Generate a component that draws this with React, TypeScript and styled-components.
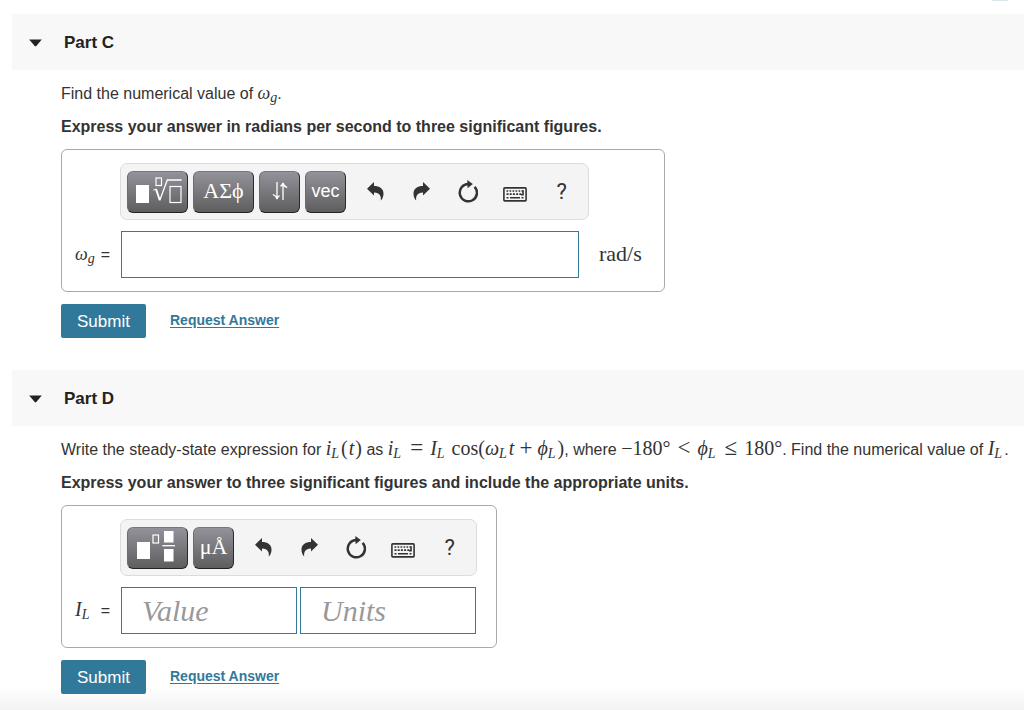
import React from "react";
import styled, { createGlobalStyle } from "styled-components";

const sans = `"Liberation Sans", Arial, sans-serif`;
const serif = `"Liberation Serif", "Times New Roman", serif`;

const GlobalStyle = createGlobalStyle`
  * { box-sizing: border-box; }
  body {
    margin: 0;
    background: #fff;
    color: #333;
    font-family: ${sans};
    font-size: 16px;
  }
  button, input { font: inherit; }
`;

const Page = styled.main`
  padding: 0 0 16px 12px;
  background: linear-gradient(to top, #f3f3f3, #fff 24px);
`;

const TopEdge = styled.div`
  display: flex;
  justify-content: flex-end;
  height: 14px;
  padding-right: 16px;
`;

const TopSliver = styled.div`
  width: 16px;
  height: 1px;
  background: #dce7ec;
`;

const Part = styled.section`
  & + & {
    margin-top: 32px;
  }
`;

const PartHeader = styled.header`
  display: flex;
  align-items: center;
  height: 56px;
  padding: 1px 0 0 16px;
  gap: 21px;
  background: #f8f8f8;
`;

const Toggle = styled.button`
  display: flex;
  padding: 0;
  border: 0;
  background: none;
`;

const PartTitle = styled.h2`
  margin: 0;
  color: #222;
  font-size: 17px;
  line-height: 24px;
`;

const PartBody = styled.div`
  padding: 12px 0 0 49px;
`;

const Prompt = styled.p`
  margin: 0 0 9px;
  line-height: 24px;
`;

const Instructions = styled.p`
  margin: 0 0 10px;
  font-weight: bold;
  line-height: 24px;
`;

const AnswerBox = styled.div`
  display: grid;
  grid-template-columns: 45px auto;
  row-gap: 11px;
  width: fit-content;
  max-width: 100%;
  padding: 13px 19px 13px 13px;
  border: 1px solid #a9a9a9;
  border-radius: 6px;
  background: #fff;
`;

const Toolbar = styled.div`
  grid-column: 2;
  justify-self: start;
  display: flex;
  align-items: center;
  gap: 5px;
  height: 57px;
  padding: 0 3px 0 6px;
  border: 1px solid #dcdcdc;
  border-radius: 7px;
  background: #f4f4f4;
`;

const ToolButton = styled.button<{ $wide?: boolean; $face?: string }>`
  display: flex;
  align-items: center;
  justify-content: center;
  width: ${(p) => (p.$wide ? 61 : 41)}px;
  height: 42px;
  padding: 0 0 2px;
  border: 1px solid;
  border-color: #77767b #2a2a2a #222 #6c6c70;
  border-radius: 6px;
  background: linear-gradient(#93929a, #5e5e5e);
  color: #fff;
  font-family: ${(p) => p.$face ?? sans};
  font-size: ${(p) => (p.$face ? 22 : 18)}px;
  line-height: 24px;
`;

const IconGroup = styled.div`
  display: flex;
  width: 233px;
  margin-left: 1px;
`;

const IconButton = styled.button`
  display: flex;
  flex: 1;
  align-items: center;
  justify-content: center;
  height: 42px;
  padding: 0;
  border: 0;
  background: none;
  color: #333;
  font-family: Roboto, ${sans};
  font-size: 22px;
`;

const AnswerLabel = styled.label`
  display: flex;
  align-items: baseline;
  justify-content: space-between;
  align-self: center;
  margin-right: 10px;
  line-height: 24px;
  white-space: nowrap;
`;

const Fields = styled.div`
  display: flex;
  align-items: center;
  gap: 3px;
  padding-left: 1px;
`;

const Field = styled.input<{ $long?: boolean }>`
  width: ${(p) => (p.$long ? 458 : 176)}px;
  min-width: 0;
  height: 47px;
  padding: 0 20px;
  border: 1px solid #367a99;
  border-radius: 0;
  outline: 0;
  background: #fff;
  font-family: ${serif};
  font-size: 30px;
  &::placeholder {
    color: #999;
    font-style: italic;
    opacity: 1;
  }
`;

const Unit = styled.span`
  padding: 0 3px 2px 17px;
  font-family: ${serif};
  font-size: 22px;
`;

const Actions = styled.div`
  display: flex;
  align-items: center;
  gap: 24px;
  margin-top: 12px;
`;

const Submit = styled.button`
  width: 85px;
  height: 34px;
  padding: 2px 0 0;
  border: 0;
  border-radius: 2px;
  background: #31799a;
  color: #fff;
  font-size: 17px;
`;

const RequestLink = styled.a`
  padding-bottom: 2px;
  color: #31799a;
  font-size: 14px;
  font-weight: bold;
  text-underline-offset: 2px;
`;

const Formula = styled.span<{ $small?: boolean }>`
  font-family: ${serif};
  font-size: ${(p) => (p.$small ? 18 : 20)}px;
  line-height: 1px;
  white-space: nowrap;
`;

const Op = styled.span<{ $tight?: boolean }>`
  margin: 0 ${(p) => (p.$tight ? 5 : 7)}px;
  font-size: 23px;
`;

const Func = styled.span`
  margin-left: 5px;
`;

const Arg = styled.i`
  margin: 0 1px;
`;

const Subscript = styled.sub<{ $snug: boolean }>`
  margin-right: ${(p) => (p.$snug ? 0 : 2)}px;
  font-size: 14px;
  line-height: 1px;
  vertical-align: -3px;
`;

const Glyph = styled.svg`
  display: block;
  fill: none;
  stroke: currentColor;
`;

type SymProps = { base: string; sub: string; snug?: boolean };
const Sym = ({ base, sub, snug = false }: SymProps) => (
  <>
    <i>{base}</i>
    <Subscript $snug={snug}>
      <i>{sub}</i>
    </Subscript>
  </>
);

const Caret = () => (
  <Glyph width="15" height="8" viewBox="0 0 15 8">
    <path d="M1.200 .6h12.600L8.300 7Q7.500 7.800 6.700 7z" fill="#222" stroke="none" />
  </Glyph>
);

const RootIcon = () => (
  <Glyph width="50" height="28" viewBox="-3 0 50 28">
    <rect x="0" y="8" width="13" height="18" fill="#fff" stroke="none" />
    <rect x="20" y="1" width="5.500" height="7.500" strokeWidth="1.2" />
    <path d="M17.300 13.200l2.700-1.200" strokeWidth="1" />
    <path d="M20 12l3.700 11" strokeWidth="2" />
    <path d="M23.700 23.500L31.300 3h14.400" strokeWidth="1.300" />
    <rect x="34" y="9.500" width="11" height="16" strokeWidth="1.2" />
  </Glyph>
);

const FractionIcon = () => (
  <Glyph width="42" height="31" viewBox="0 0 42 31">
    <rect x="0" y="11" width="13" height="17" fill="#fff" stroke="none" />
    <rect x="16" y="4" width="5.500" height="8" strokeWidth="1.2" />
    <rect x="27" y="0" width="9.500" height="11.500" fill="#fff" stroke="none" />
    <path d="M25.300 14.700h12.700" strokeWidth="1.300" />
    <rect x="27" y="18" width="9.500" height="12.500" fill="#fff" stroke="none" />
  </Glyph>
);

const HarpoonIcon = () => (
  <Glyph width="16" height="18" viewBox="0 0 16 18" strokeWidth="1.3">
    <path d="M5 0v17M.8 12.500Q4.200 13.500 5 17Q5.400 15 7.500 13.600" />
    <path d="M11 18V1M8.500 4.400Q10.600 3 11 1Q11.800 4.500 15.200 5.500" />
  </Glyph>
);

const UndoIcon = ({ flip }: { flip?: boolean }) => (
  <Glyph width="17" height="19" viewBox="0 0 17 19">
    <path
      transform={flip ? "matrix(-1 0 0 1 17 0)" : undefined}
      d="M0 6.800L7 0V4C12.500 4 16.500 6.500 16.500 11.500C16.500 14.500 15.500 17 13.800 18.500C14.300 14 13 10.800 7 10.400V13.600z"
      fill="currentColor"
      stroke="none"
    />
  </Glyph>
);

const ResetIcon = () => (
  <Glyph width="20" height="23" viewBox="0 0 20 23">
    <path d="M10.500 4.100A8.600 8.600 0 1 0 16.600 6.800" strokeWidth="2.500" />
    <path d="M9.300 0L14.800 4L9.600 8.300z" fill="currentColor" stroke="none" />
  </Glyph>
);

const KeyboardIcon = () => (
  <Glyph width="24" height="20" viewBox="0 0 24 20">
    <rect x=".9" y="5.900" width="22.200" height="13" rx=".8" strokeWidth="1.600" />
    <path d="M3.500 9h17" strokeWidth="1.700" strokeDasharray="1.700 1.300" />
    <path d="M3.500 12.200h15" strokeWidth="1.700" strokeDasharray="2 1.200" />
    <path d="M3.500 15.700h2M7 15.700h10M18.500 15.700h2" strokeWidth="1.600" />
    <path d="M20 8.200v4.600h-2" strokeWidth="1.600" />
  </Glyph>
);

const EditIcons = () => (
  <IconGroup>
    <IconButton type="button" aria-label="Undo">
      <UndoIcon />
    </IconButton>
    <IconButton type="button" aria-label="Redo">
      <UndoIcon flip />
    </IconButton>
    <IconButton type="button" aria-label="Reset">
      <ResetIcon />
    </IconButton>
    <IconButton type="button" aria-label="Keyboard shortcuts">
      <KeyboardIcon />
    </IconButton>
    <IconButton type="button" aria-label="Help">
      ?
    </IconButton>
  </IconGroup>
);

const SubmitRow = () => (
  <Actions>
    <Submit type="submit">Submit</Submit>
    <RequestLink href="#request-answer">Request Answer</RequestLink>
  </Actions>
);

type PartSectionProps = { title: string; children: React.ReactNode };
const PartSection = ({ title, children }: PartSectionProps) => (
  <Part>
    <PartHeader>
      <Toggle type="button" aria-label={`Collapse ${title}`} aria-expanded>
        <Caret />
      </Toggle>
      <PartTitle>{title}</PartTitle>
    </PartHeader>
    <PartBody>
      {children}
      <SubmitRow />
    </PartBody>
  </Part>
);

export default function App() {
  return (
    <>
      <GlobalStyle />
      <Page>
        <TopEdge>
          <TopSliver />
        </TopEdge>

        <PartSection title="Part C">
          <Prompt>
            Find the numerical value of{" "}
            <Formula $small>
              <Sym base="ω" sub="g" snug />
            </Formula>
            .
          </Prompt>
          <Instructions>
            Express your answer in radians per second to three significant figures.
          </Instructions>
          <AnswerBox>
            <Toolbar>
              <ToolButton type="button" $wide aria-label="Templates">
                <RootIcon />
              </ToolButton>
              <ToolButton type="button" $wide $face={serif}>
                ΑΣϕ
              </ToolButton>
              <ToolButton type="button" aria-label="Arrows">
                <HarpoonIcon />
              </ToolButton>
              <ToolButton type="button">vec</ToolButton>
              <EditIcons />
            </Toolbar>
            <AnswerLabel htmlFor="omega">
              <Formula $small>
                <Sym base="ω" sub="g" snug />
              </Formula>
              <span>=</span>
            </AnswerLabel>
            <Fields>
              <Field id="omega" type="text" $long />
              <Unit>rad/s</Unit>
            </Fields>
          </AnswerBox>
        </PartSection>

        <PartSection title="Part D">
          <Prompt>
            Write the steady-state expression for{" "}
            <Formula>
              <Sym base="i" sub="L" />(<Arg>t</Arg>)
            </Formula>{" "}
            as{" "}
            <Formula>
              <Sym base="i" sub="L" />
              <Op>=</Op>
              <Sym base="I" sub="L" />
              <Func>cos(</Func>
              <Sym base="ω" sub="L" />
              <i>t</i>
              <Op $tight>+</Op>
              <Sym base="ϕ" sub="L" />)
            </Formula>
            , where{" "}
            <Formula>
              −180°
              <Op>&lt;</Op>
              <Sym base="ϕ" sub="L" />
              <Op>≤</Op>
              180°
            </Formula>
            . Find the numerical value of{" "}
            <Formula>
              <Sym base="I" sub="L" />
            </Formula>
            .
          </Prompt>
          <Instructions>
            Express your answer to three significant figures and include the appropriate units.
          </Instructions>
          <AnswerBox>
            <Toolbar>
              <ToolButton type="button" $wide aria-label="Templates">
                <FractionIcon />
              </ToolButton>
              <ToolButton type="button" $face={serif}>
                μÅ
              </ToolButton>
              <EditIcons />
            </Toolbar>
            <AnswerLabel htmlFor="current-value">
              <Formula>
                <Sym base="I" sub="L" />
              </Formula>
              <span>=</span>
            </AnswerLabel>
            <Fields>
              <Field id="current-value" type="text" placeholder="Value" />
              <Field type="text" placeholder="Units" aria-label="Units" />
            </Fields>
          </AnswerBox>
        </PartSection>
      </Page>
    </>
  );
}
